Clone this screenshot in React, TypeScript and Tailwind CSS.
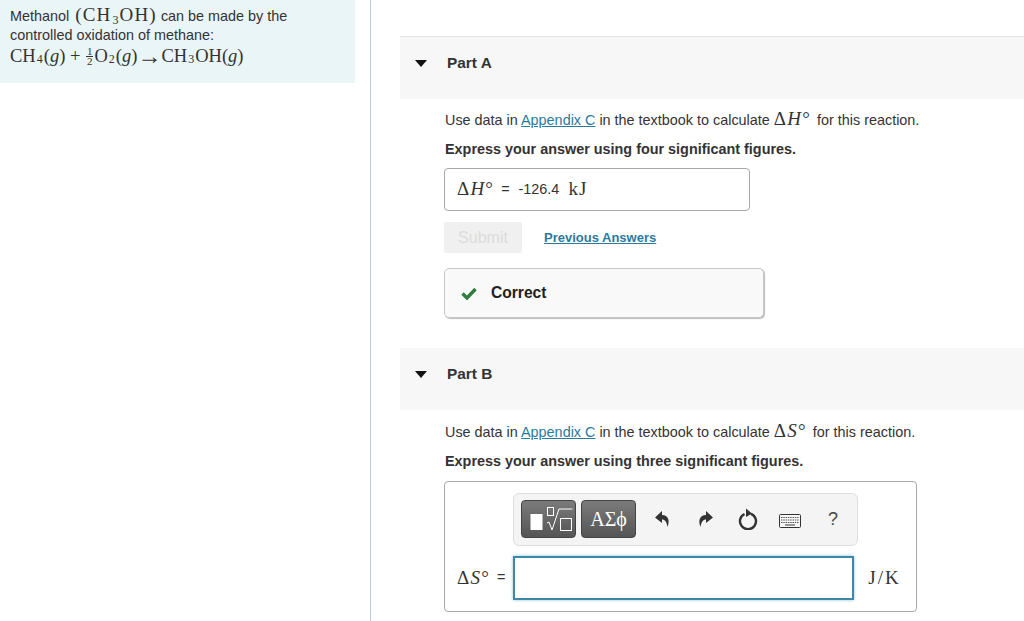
import { ReactNode } from "react";

const serif = "font-['Liberation_Serif',serif]";

function M({ children, className = "" }: { children: ReactNode; className?: string }) {
  return <span className={`${serif} text-[19px] tracking-[1.2px] text-[#333] ${className}`}>{children}</span>;
}

function Sub({ children }: { children: ReactNode }) {
  return <span className="text-[12px] tracking-normal relative top-[3px] mx-[1px]">{children}</span>;
}

function PartHeader({ label }: { label: string }) {
  return (
    <div className="h-[62px] bg-[#f7f7f7] flex items-center pb-[10px] pl-[15px] text-[15.4px] font-bold text-[#333]">
      <svg width="12" height="7" viewBox="0 0 12 7" className="mr-[20px]">
        <path d="M0 0h12L6 7z" fill="#111" />
      </svg>
      {label}
    </div>
  );
}

function Prompt({ symbol }: { symbol: string }) {
  return (
    <p className="h-[20px] leading-[20px] whitespace-nowrap">
      Use data in <a className="text-[#2b7a9f] underline">Appendix C</a> in the textbook to calculate{" "}
      <M className="mr-[2px]">
        Δ<i>{symbol}</i>°
      </M>{" "}
      for this reaction.
    </p>
  );
}

function Toolbar() {
  return (
    <div className="w-[345px] h-[53px] bg-[#f4f4f4] border border-[#dedede] rounded-[6px] flex items-center pl-[7px] pb-[1px]">
      <div className="w-[55px] h-[38px] rounded-[4px] border border-[#444] bg-gradient-to-b from-[#7b7b7b] to-[#555] flex items-center justify-center">
        <svg width="50" height="32" viewBox="0 0 50 32" fill="none" stroke="#fff" strokeWidth="1">
          <rect x="6.500" y="11" width="12" height="16" fill="#fff" stroke="none" />
          <rect x="23.500" y="4.500" width="6" height="8" />
          <path d="M23 20l2-1 3 8 7-21h13.500" />
          <rect x="36.500" y="15.500" width="11" height="12" />
        </svg>
      </div>
      <div className={`ml-[5px] w-[55px] h-[38px] rounded-[4px] border border-[#444] bg-gradient-to-b from-[#7b7b7b] to-[#555] flex items-center justify-center text-white text-[20px] ${serif}`}>
        ΑΣϕ
      </div>
      <svg width="17" height="18" viewBox="0 0 17 18" className="ml-[18px]">
        <path d="M8 1L1 7.500 8 13V9.500c3 0 4.500 2 5.500 7.500 2.500-6 1-12-5.500-12z" fill="#333" />
      </svg>
      <svg width="17" height="18" viewBox="0 0 17 18" className="ml-[26px]">
        <path d="M9 1l7 6.500L9 13V9.500c-3 0-4.500 2-5.500 7.500C1 11 2.500 5 9 5z" fill="#333" />
      </svg>
      <svg width="20" height="22" viewBox="0 0 20 22" fill="none" className="ml-[24px]">
        <path d="M6.500 6A8 8 0 1 0 13 5.800" stroke="#333" strokeWidth="2.400" />
        <path d="M8 0.500l6 5-6 3.500z" fill="#333" />
      </svg>
      <svg width="22" height="14" viewBox="0 0 22 14" className="ml-[21px] mt-[3px]">
        <rect x="0.500" y="0.500" width="21" height="13" rx="1" fill="#f8f8f8" stroke="#333" />
        <path d="M2 3.500h18M2 6h18M2 8.500h18" stroke="#555" strokeWidth="1.200" strokeDasharray="1.500 0.800" />
        <path d="M6 11h10" stroke="#555" strokeWidth="1.200" />
      </svg>
      <span className="ml-[27px] text-[18px] text-[#444]">?</span>
    </div>
  );
}

export default function App() {
  return (
    <div className="h-[621px] overflow-hidden flex bg-white text-[14.4px] text-[#333] font-['Liberation_Sans',sans-serif]">
      <aside className="w-[371px] shrink-0 border-r border-[#b9cad6]">
        <div className="w-[355px] h-[83px] bg-[#e9f5f7] pl-[10px] pt-[7px] leading-[18.500px]">
          <p className="whitespace-nowrap">
            Methanol <M className="ml-[2px] tracking-[0.4px] leading-[0]">(CH<Sub>3</Sub>OH)</M> can be made by the
          </p>
          <p>controlled oxidation of methane:</p>
          <p className={`${serif} text-[18.5px] leading-[22px] whitespace-nowrap flex items-center`}>
            CH<Sub>4</Sub>(<i>g</i>)&nbsp;+&nbsp;
            <span className="inline-flex flex-col items-center text-[11px] leading-[9px] mx-[1px]">
              <span className="border-b border-[#333] px-[1px]">1</span>
              <span>2</span>
            </span>
            O<Sub>2</Sub>(<i>g</i>)<span className="text-[24px] leading-none">→</span>CH<Sub>3</Sub>OH(<i>g</i>)
          </p>
        </div>
      </aside>
      <main className="flex-1 min-w-0 pl-[29px] pt-[36px]">
        <div className="border-t border-[#e5e5e5]">
          <PartHeader label="Part A" />
        </div>
        <section className="pl-[45px] pt-[10px] h-[249px]">
          <Prompt symbol="H" />
          <p className="mt-[10px] h-[20px] leading-[20px] font-bold">Express your answer using four significant figures.</p>
          <div className="mt-[9px] -ml-[1px] w-[306px] h-[43px] border border-[#a8a8a8] rounded-[4px] flex items-center pl-[12px]">
            <M>
              Δ<i>H</i>°
            </M>
            <span className="ml-[7px]">=</span>
            <span className="ml-[9px]">-126.4</span>
            <M className="ml-[9px] text-[18px]">kJ</M>
          </div>
          <div className="mt-[11px] -ml-[1px] flex items-center">
            <button className="w-[78px] h-[31px] rounded-[2px] bg-[#f0f0f0] text-[#dcdcdc] text-[16px]">Submit</button>
            <a className="ml-[22px] text-[13px] font-bold text-[#2b7a9f] underline">Previous Answers</a>
          </div>
          <div className="mt-[15px] -ml-[1px] w-[320px] h-[50px] bg-[#f9f9f9] border border-[#c8c8c8] rounded-[5px] shadow-[1px_1px_1px_#bbb] flex items-center pl-[16px] text-[15.600px] font-bold text-[#222]">
            <svg width="16" height="13" viewBox="0 0 16 13" className="mr-[14px]">
              <path d="M1.500 6.500l4.500 4.500L14.500 2" fill="none" stroke="#2f7d3f" strokeWidth="3.400" />
            </svg>
            Correct
          </div>
        </section>
        <PartHeader label="Part B" />
        <section className="pl-[45px] pt-[11px]">
          <Prompt symbol="S" />
          <p className="mt-[10px] h-[20px] leading-[20px] font-bold">Express your answer using three significant figures.</p>
          <div className="mt-[10px] -ml-[1px] w-[473px] h-[131px] border border-[#a8a8a8] rounded-[4px] pl-[12px] pt-[11px]">
            <div className="ml-[56px]">
              <Toolbar />
            </div>
            <div className="mt-[10px] flex items-center">
              <M>
                Δ<i>S</i>°
              </M>
              <span className="ml-[7px]">=</span>
              <div className="ml-[8px] w-[341px] h-[44px] border-2 border-[#3f87a8] shadow-[0_0_3px_#8fc0d6]" />
              <M className="ml-[14px] text-[18px] tracking-[2px]">J/K</M>
            </div>
          </div>
        </section>
      </main>
    </div>
  );
}
